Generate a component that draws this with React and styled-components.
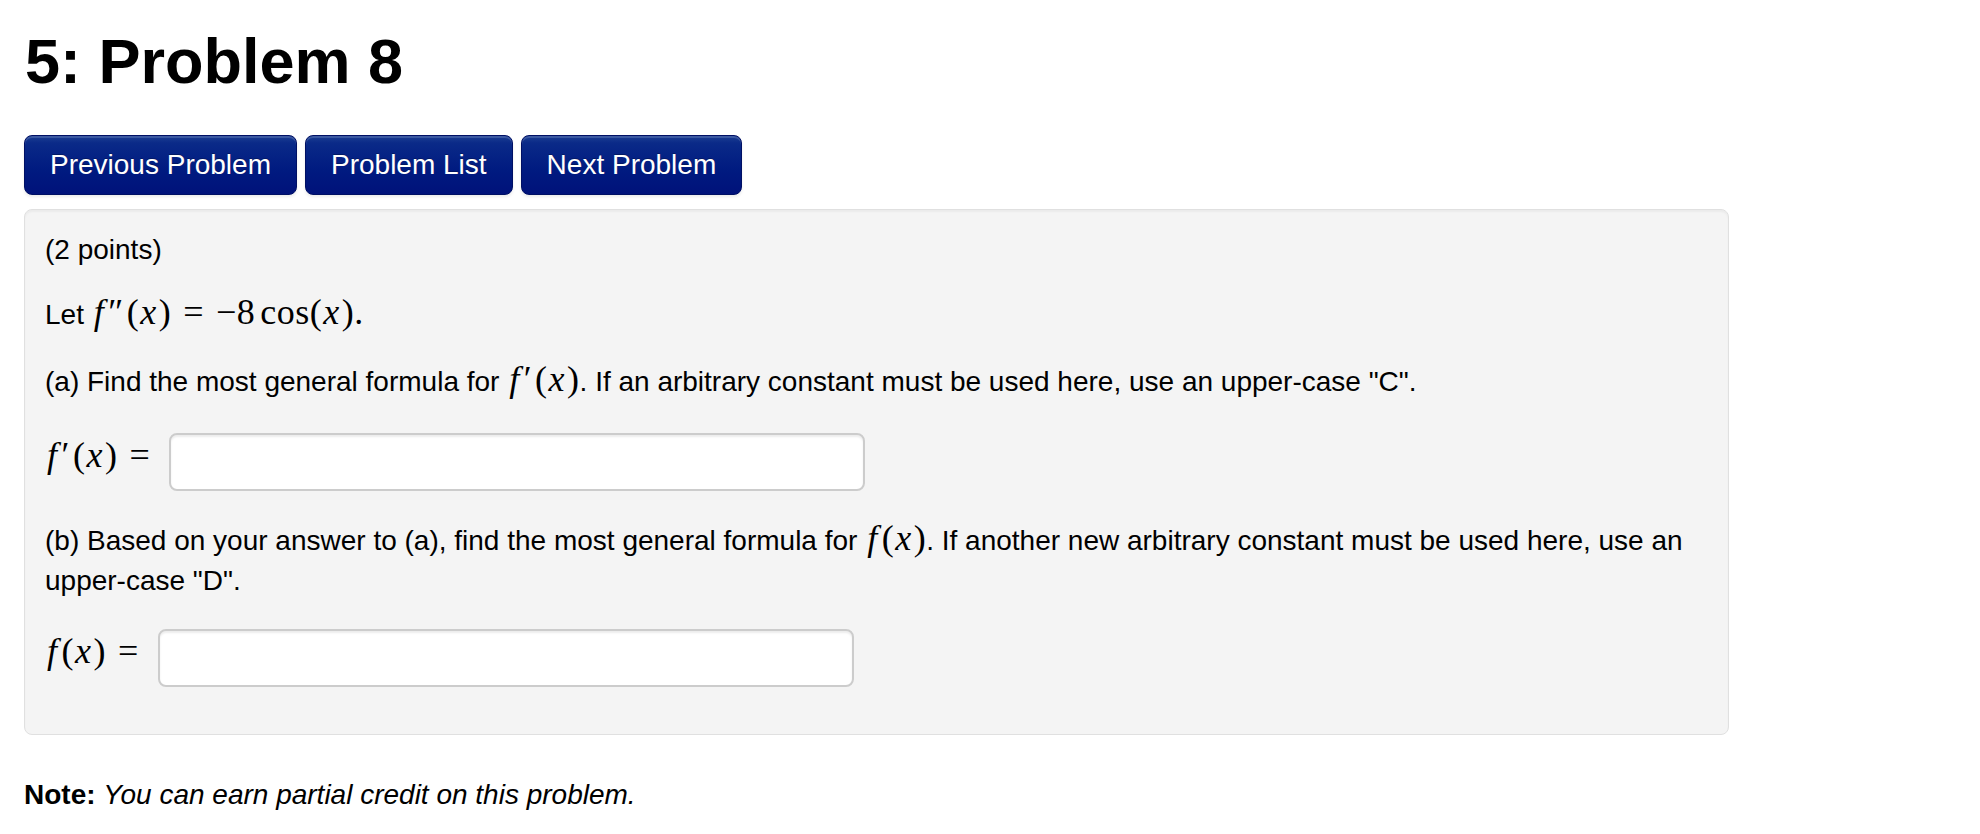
import React from "react";
import styled, { createGlobalStyle } from "styled-components";

const GlobalStyle = createGlobalStyle`
  html, body {
    margin: 0;
    padding: 0;
    background: #ffffff;
  }
  body {
    font-family: "Liberation Sans", Arial, Helvetica, sans-serif;
    font-size: 28px;
    line-height: 40px;
    color: #000;
  }
`;

const Page = styled.div`
  padding: 21px 24px 40px;
`;

const Title = styled.h2`
  margin: 0 0 34px;
  font-size: 63px;
  line-height: 80px;
  font-weight: bold;
  color: #000;
  padding-left: 1px;
`;

const NavRow = styled.div`
  display: flex;
  gap: 8px;
  margin-bottom: 14px;
`;

const NavButton = styled.a`
  display: inline-block;
  padding: 9px 25px;
  font-size: 28px;
  line-height: 40px;
  color: #fff;
  text-decoration: none;
  text-shadow: 0 -1px 0 rgba(0, 0, 0, 0.25);
  border: 1px solid #001064;
  border-radius: 8px;
  background: linear-gradient(to bottom, #1c3f93 0%, #0a2a88 12%, #001a80 60%, #00127a 100%);
  box-shadow: inset 0 2px 0 rgba(255, 255, 255, 0.15), 0 2px 3px rgba(0, 0, 0, 0.08);
  cursor: pointer;
`;

const Well = styled.div`
  box-sizing: border-box;
  width: 1705px;
  padding: 20px;
  background: #f4f4f4;
  border: 1px solid #e0e0e0;
  border-radius: 8px;
  box-shadow: inset 0 2px 2px rgba(0, 0, 0, 0.04);
`;

const Para = styled.div`
  margin-bottom: ${(p) => p.$gap}px;
`;

const AnswerRow = styled.div`
  display: flex;
  align-items: center;
  height: 58px;
  margin-bottom: ${(p) => p.$gap}px;
`;

const Label = styled.span`
  margin-right: 7px;
  margin-bottom: 8px;
  line-height: 40px;
`;

const AnswerInput = styled.input`
  box-sizing: border-box;
  width: 696px;
  height: 58px;
  padding: 8px 12px;
  font-size: 28px;
  border: 2px solid #cccccc;
  border-radius: 8px;
  background: #fff;
  box-shadow: inset 0 2px 2px rgba(0, 0, 0, 0.075);
  outline: none;
`;

const Math = styled.span`
  font-family: "Liberation Serif", "DejaVu Serif", "Times New Roman", serif;
  font-size: 36px;
  line-height: 0;
  letter-spacing: 0.5px;
  white-space: nowrap;
`;

const Var = styled.i`
  font-style: italic;
  padding: 0 ${(p) => (p.$wide ? 4 : 2)}px 0 ${(p) => (p.$lead ? 2 : 1)}px;
`;

const Prime = styled.span`
  margin-right: 3px;
`;

const Rel = styled.span`
  margin: 0 12px;
`;

const Op = styled.span`
  margin-left: 5px;
`;

const Note = styled.div`
  margin-top: 40px;
`;

const fp = (
  <>
    <Var $wide $lead>f</Var>
    <Prime>′</Prime>(<Var>x</Var>)
  </>
);

export default function App() {
  return (
    <>
      <GlobalStyle />
      <Page>
        <Title>5: Problem 8</Title>
        <NavRow>
          <NavButton>Previous Problem</NavButton>
          <NavButton>Problem List</NavButton>
          <NavButton>Next Problem</NavButton>
        </NavRow>
        <Well>
          <Para $gap={25}>(2 points)</Para>
          <Para $gap={27}>
            Let{" "}
            <Math>
              <Var $wide $lead>f</Var>
              <Prime>″</Prime>(<Var>x</Var>)<Rel>=</Rel>−8<Op>cos</Op>(<Var>x</Var>).
            </Math>
          </Para>
          <Para $gap={31}>
            (a) Find the most general formula for <Math>{fp}</Math>. If an arbitrary constant
            must be used here, use an upper-case "C".
          </Para>
          <AnswerRow $gap={30}>
            <Label>
              <Math>
                {fp}
                <Rel>=</Rel>
              </Math>
            </Label>
            <AnswerInput type="text" />
          </AnswerRow>
          <Para $gap={28}>
            (b) Based on your answer to (a), find the most general formula for{" "}
            <Math>
              <Var $wide $lead>f</Var>(<Var>x</Var>)
            </Math>
            . If another new arbitrary constant must be used here, use an upper-case "D".
          </Para>
          <AnswerRow $gap={27}>
            <Label>
              <Math>
                <Var $wide $lead>f</Var>(<Var>x</Var>)<Rel>=</Rel>
              </Math>
            </Label>
            <AnswerInput type="text" />
          </AnswerRow>
        </Well>
        <Note>
          <b>Note:</b> <i>You can earn partial credit on this problem.</i>
        </Note>
      </Page>
    </>
  );
}
